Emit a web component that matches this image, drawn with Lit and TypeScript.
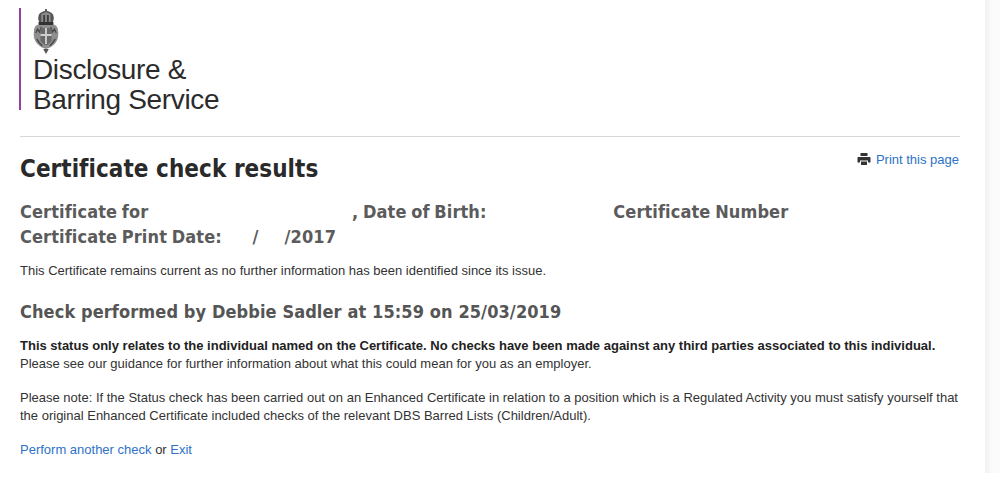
import { LitElement, html, css } from "lit";
import { customElement } from "lit/decorators.js";

@customElement("app-root")
export class AppRoot extends LitElement {
  static styles = css`
    :host { display: block; width: 1000px; height: 490px; background: #fff; overflow: hidden; font-family: "Liberation Sans", Arial, sans-serif; color: #333; }
    .frame { width: 1000px; height: 473px; display: flex; }
    .page { width: 940px; padding: 8px 0 0 20px; flex: none; }
    .side { margin-left: 25px; width: 15px; background: linear-gradient(90deg, #f1f1f1, #fafafa 40%, #fbfbfb); }
    .logo { border-left: 2px solid #933fa5; margin-left: -1px; height: 102px; padding-left: 12px; display: flex; flex-direction: column; box-sizing: border-box; }
    .crest { width: 26px; height: 46px; display: block; flex: none; margin-top: 1px; margin-bottom: -1px; }
    .logo-text { font-size: 28px; line-height: 30px; letter-spacing: -0.35px; color: #2b2b2b; margin-top: 1px; white-space: nowrap; }
    .rule { height: 1px; background: #d8d8d8; margin-top: 26px; }
    .head { display: flex; justify-content: space-between; align-items: flex-start; height: 51px; }
    h1 { margin: 17px 0 0; font: bold 24px/30px "DejaVu Sans Condensed", "DejaVu Sans", Tahoma, sans-serif; font-stretch: condensed; color: #2a2a2a; letter-spacing: 0.05px; }
    .print { display: flex; align-items: center; gap: 5px; margin: 14px 1px 0 0; font-size: 13px; line-height: 18px; }
    .print svg { width: 14px; height: 14px; display: block; margin-top: -3px; }
    a { color: #2d72c8; text-decoration: none; }
    h2 { margin: 0; font: bold 18px/25px "DejaVu Sans Condensed", "DejaVu Sans", Tahoma, sans-serif; font-stretch: condensed; color: #5b5b5b; letter-spacing: 0.1px; word-spacing: -1px; white-space: nowrap; }
    .details { margin-top: 11px; }
    .gap { display: inline-block; }
    .g1 { width: 199px; } .g2 { width: 122px; } .g3 { width: 26px; } .g4 { width: 26px; }
    p { margin: 0; font-size: 13px; line-height: 18.57px; color: #333; }
    .current { margin-top: 13px; }
    h3 { margin: 19px 0 0; font: bold 18px/24px "DejaVu Sans Condensed", "DejaVu Sans", Tahoma, sans-serif; font-stretch: condensed; color: #555; letter-spacing: 0.1px; white-space: nowrap; }
    .status { margin-top: 13px; }
    .status b { color: #222; }
    .note { margin-top: 15px; }
    .links { margin-top: 15px; }
  `;

  render() {
    return html`
      <div class="frame">
        <div class="page">
          <div class="logo">
            <svg class="crest" viewBox="0 0 28 46" preserveAspectRatio="none" aria-hidden="true">
              <path d="M13 0h2v3h-2z" fill="#555"/>
              <path d="M6 7c0-3 5-5 8-5s8 2 8 5c1 2 0 5-1 7H7C6 12 5 9 6 7z" fill="#555"/>
              <path d="M9 5l5-2 5 2v8H9z" fill="#8c8c8c"/>
              <path d="M11 6h2v7h-2zM15 6h2v7h-2z" fill="#3c3c3c"/>
              <path d="M6 13h16v3H6z" fill="#333"/>
              <path d="M1 22c0-4 3-7 6-6h14c3-1 6 2 6 6 1 6-1 11-5 14-2 2-5 3-8 4-3-1-6-2-8-4-4-3-6-8-5-14z" fill="#8f8f8f"/>
              <path d="M3 24l2-4 2 3 2-5M25 24l-2-4-2 3-2-5M4 30l3 4 3 3M24 30l-3 4-3 3" stroke="#444" stroke-width="1.300" fill="none"/>
              <path d="M8 19h12v13c-2 2-4 4-6 4s-4-2-6-4z" fill="#6a6a6a"/>
              <path d="M13 19h2v16h-2zM8 25h12v2H8z" fill="#cfcfcf"/>
              <path d="M11 40h6l-3 5z" fill="#555"/>
            </svg>
            <div class="logo-text">Disclosure &amp;<br />Barring Service</div>
          </div>
          <div class="rule"></div>
          <div class="head">
            <h1>Certificate check results</h1>
            <a class="print" href="#">
              <svg viewBox="0 0 14 14" aria-hidden="true"><path fill="#333" d="M3.500 1h7v3h-7zM1.500 5h11c.6 0 1 .4 1 1v4.500h-2.500V8.500H3v2H.5V6c0-.6.4-1 1-1zM4 9.500h6V13H4z"/></svg>
              Print this page
            </a>
          </div>
          <div class="details">
            <h2>Certificate for <span class="gap g1"></span>, Date of Birth: <span class="gap g2"></span>Certificate Number</h2>
            <h2>Certificate Print Date: <span class="gap g3"></span>/<span class="gap g4"></span>/2017</h2>
          </div>
          <p class="current">This Certificate remains current as no further information has been identified since its issue.</p>
          <h3>Check performed by Debbie Sadler at 15:59 on 25/03/2019</h3>
          <p class="status"><b>This status only relates to the individual named on the Certificate. No checks have been made against any third parties associated to this individual.</b><br />Please see our guidance for further information about what this could mean for you as an employer.</p>
          <p class="note">Please note: If the Status check has been carried out on an Enhanced Certificate in relation to a position which is a Regulated Activity you must satisfy yourself that the original Enhanced Certificate included checks of the relevant DBS Barred Lists (Children/Adult).</p>
          <p class="links"><a href="#">Perform another check</a> or <a href="#">Exit</a></p>
        </div>
        <div class="side"></div>
      </div>
    `;
  }
}
